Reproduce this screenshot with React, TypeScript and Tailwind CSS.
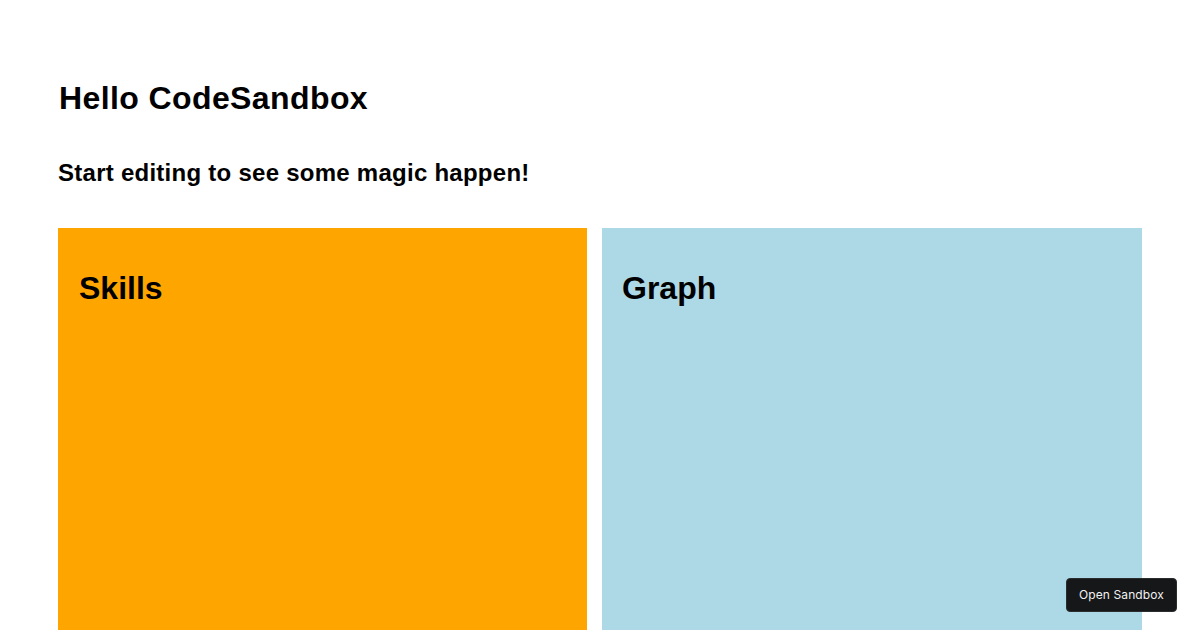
import React from "react";

export default function App() {
  return (
    <div className="relative min-h-[630px] bg-white text-black [font-family:'Liberation_Sans',Arial,sans-serif]">
      <div className="pl-[58px] pr-[58px] pt-[80px]">
        <h1 className="text-[32px] font-bold leading-[37px] m-0 pl-[1px] tracking-[0.4px]">Hello CodeSandbox</h1>
        <h2 className="text-[24px] font-bold leading-[28px] mt-[42px] m-0 tracking-[0.26px]">
          Start editing to see some magic happen!
        </h2>
        <div className="flex mt-[41px]">
          <div className="w-[529px] h-[480px] bg-[#ffa500] px-[20px] pt-[42px]">
            <h1 className="text-[32px] font-bold leading-[37px] m-0 pl-[1px]">Skills</h1>
          </div>
          <div className="w-[540px] ml-[15px] h-[480px] bg-[#add8e6] px-[20px] pt-[42px]">
            <h1 className="text-[32px] font-bold leading-[37px] m-0">Graph</h1>
          </div>
        </div>
      </div>
      <div className="fixed right-[23px] bottom-[18px] w-[111px] h-[34px] rounded-[4px] bg-[#151718] border border-[#2a2c2e] flex items-center justify-center text-[12px] text-[#f2f2f2] [font-family:Inter,sans-serif] tracking-[0.1px]">
        Open Sandbox
      </div>
    </div>
  );
}
